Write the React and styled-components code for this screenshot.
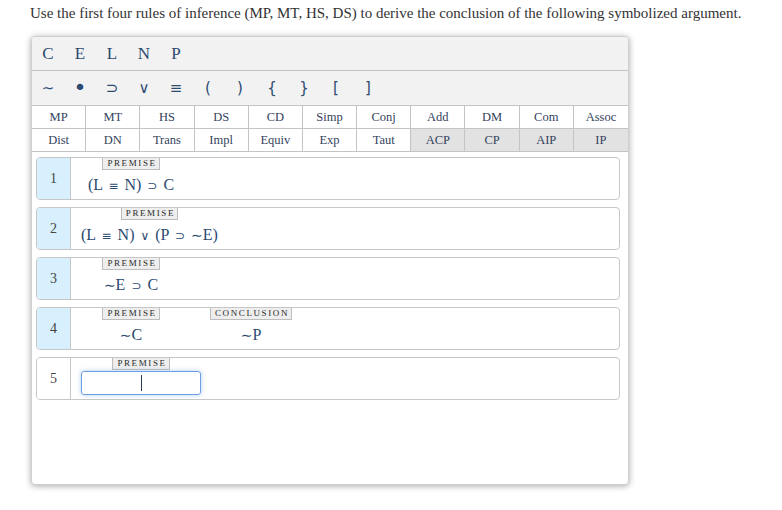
import React from "react";
import styled, { createGlobalStyle } from "styled-components";

const GlobalStyle = createGlobalStyle`
  body {
    margin: 0;
    background: #fff;
    font-family: "Liberation Serif", "Times New Roman", serif;
    color: #333;
  }
`;

const Page = styled.div`
  width: 782px;
  height: 510px;
  padding: 4px 0 0 30px;
  box-sizing: border-box;
`;

const Title = styled.p`
  margin: 0;
  font-size: 15px;
  line-height: 18px;
  color: #333;
`;

const Panel = styled.div`
  margin: 14px 0 0 1px;
  width: 598px;
  height: 449px;
  box-sizing: border-box;
  border: 1px solid #d0d0d0;
  border-radius: 4px;
  background: #fff;
  box-shadow: 0 1px 6px rgba(0, 0, 0, 0.35);
  overflow: hidden;
`;

const KeyBar = styled.div`
  display: flex;
  align-items: center;
  height: ${(p) => (p.$first ? "33px" : "34px")};
  background: #f2f2f2;
  border-bottom: 1px solid #c4c4c4;
`;

const Key = styled.span`
  width: 32px;
  text-align: center;
  font-size: ${(p) => (p.$big ? "22px" : p.$small ? "15px" : "17px")};
  line-height: 20px;
  font-family: ${(p) =>
    p.$small ? '"DejaVu Sans", sans-serif' : '"Liberation Serif", serif'};
  color: #2b4a70;
`;

const RuleGrid = styled.div`
  display: grid;
  grid-template-columns: repeat(11, 1fr);
  grid-template-rows: 23px 22px;
  border-bottom: 1px solid #c4c4c4;
`;

const Rule = styled.div`
  display: flex;
  align-items: center;
  justify-content: center;
  font-size: 12.5px;
  color: #34435c;
  background: ${(p) => (p.$off ? "#e2e2e2" : "#fff")};
  border-right: ${(p) => (p.$last ? "none" : "1px solid #c4c4c4")};
  border-bottom: ${(p) => (p.$top ? "1px solid #c4c4c4" : "none")};
`;

const Lines = styled.div`
  display: flex;
  flex-direction: column;
  gap: 7px;
  padding: 5px 8px 0 4px;
`;

const LineCard = styled.div`
  display: flex;
  height: 43px;
  box-sizing: border-box;
  border: 1px solid #c6c6c6;
  border-radius: 4px;
  overflow: hidden;
`;

const LineNum = styled.div`
  width: 33px;
  flex-shrink: 0;
  display: flex;
  align-items: center;
  justify-content: center;
  font-size: 14px;
  color: #444;
  background: ${(p) => (p.$done ? "#d8f0fd" : "#fff")};
  border-right: 1px solid #c6c6c6;
`;

const LineBody = styled.div`
  display: flex;
  align-items: flex-start;
  gap: 20px;
  padding-left: 10px;
`;

const Block = styled.div`
  display: flex;
  flex-direction: column;
  align-items: center;
  min-width: 100px;
`;

const Tag = styled.span`
  font-size: 9px;
  letter-spacing: 1.6px;
  line-height: 11px;
  padding: 0 2px 0 4px;
  background: #eee;
  border: 1px solid #bdbdbd;
  border-top: none;
  color: #2a2a2a;
`;

const Formula = styled.span`
  margin-top: 6px;
  font-size: 16px;
  line-height: 18px;
  word-spacing: 2px;
  color: #2b4a70;
  white-space: pre;
`;

const Sym = styled.span`
  font-family: "DejaVu Sans", sans-serif;
  font-size: ${(p) => (p.$tilde ? "14px" : "12px")};
`;

const Entry = styled.div`
  margin-top: 1px;
  width: 120px;
  height: 24px;
  box-sizing: border-box;
  border: 1px solid #6e9fe3;
  border-radius: 3px;
  box-shadow: 0 0 4px rgba(90, 150, 235, 0.5);
  display: flex;
  align-items: center;
  justify-content: center;
`;

const Caret = styled.span`
  width: 1px;
  height: 16px;
  background: #2b3a55;
`;

const letters = ["C", "E", "L", "N", "P"];
const symbols = ["∼", "•", "⊃", "∨", "≡", "(", ")", "{", "}", "[", "]"];
const rulesTop = ["MP", "MT", "HS", "DS", "CD", "Simp", "Conj", "Add", "DM", "Com", "Assoc"];
const rulesBottom = ["Dist", "DN", "Trans", "Impl", "Equiv", "Exp", "Taut", "ACP", "CP", "AIP", "IP"];

// formulas split so logic symbols use the sans font
const F = ({ parts }) => (
  <Formula>
    {parts.map((p, i) =>
      ["≡", "⊃", "∨", "∼"].includes(p) ? (
        <Sym key={i} $tilde={p === "∼"}>
          {p}
        </Sym>
      ) : (
        <React.Fragment key={i}>{p}</React.Fragment>
      )
    )}
  </Formula>
);

const lines = [
  { n: 1, blocks: [{ tag: "PREMISE", parts: ["(L ", "≡", " N) ", "⊃", " C"] }] },
  { n: 2, blocks: [{ tag: "PREMISE", parts: ["(L ", "≡", " N) ", "∨", " (P ", "⊃", " ", "∼", "E)"] }] },
  { n: 3, blocks: [{ tag: "PREMISE", parts: ["∼", "E ", "⊃", " C"] }] },
  {
    n: 4,
    blocks: [
      { tag: "PREMISE", parts: ["∼", "C"] },
      { tag: "CONCLUSION", parts: ["∼", "P"] },
    ],
  },
];

const App = () => (
  <Page>
    <GlobalStyle />
    <Title>
      Use the first four rules of inference (MP, MT, HS, DS) to derive the conclusion of the
      following symbolized argument.
    </Title>
    <Panel>
      <KeyBar $first>
        {letters.map((l) => (
          <Key key={l}>{l}</Key>
        ))}
      </KeyBar>
      <KeyBar>
        {symbols.map((s) => (
          <Key key={s} $small $big={s === "•"}>
            {s}
          </Key>
        ))}
      </KeyBar>
      <RuleGrid>
        {rulesTop.map((r, i) => (
          <Rule key={r} $top $last={i === 10}>
            {r}
          </Rule>
        ))}
        {rulesBottom.map((r, i) => (
          <Rule key={r} $off={i >= 7} $last={i === 10}>
            {r}
          </Rule>
        ))}
      </RuleGrid>
      <Lines>
        {lines.map((line) => (
          <LineCard key={line.n}>
            <LineNum $done>{line.n}</LineNum>
            <LineBody>
              {line.blocks.map((b) => (
                <Block key={b.tag}>
                  <Tag>{b.tag}</Tag>
                  <F parts={b.parts} />
                </Block>
              ))}
            </LineBody>
          </LineCard>
        ))}
        <LineCard>
          <LineNum>5</LineNum>
          <LineBody>
            <Block>
              <Tag>PREMISE</Tag>
              <Entry>
                <Caret />
              </Entry>
            </Block>
          </LineBody>
        </LineCard>
      </Lines>
    </Panel>
  </Page>
);

export default App;
